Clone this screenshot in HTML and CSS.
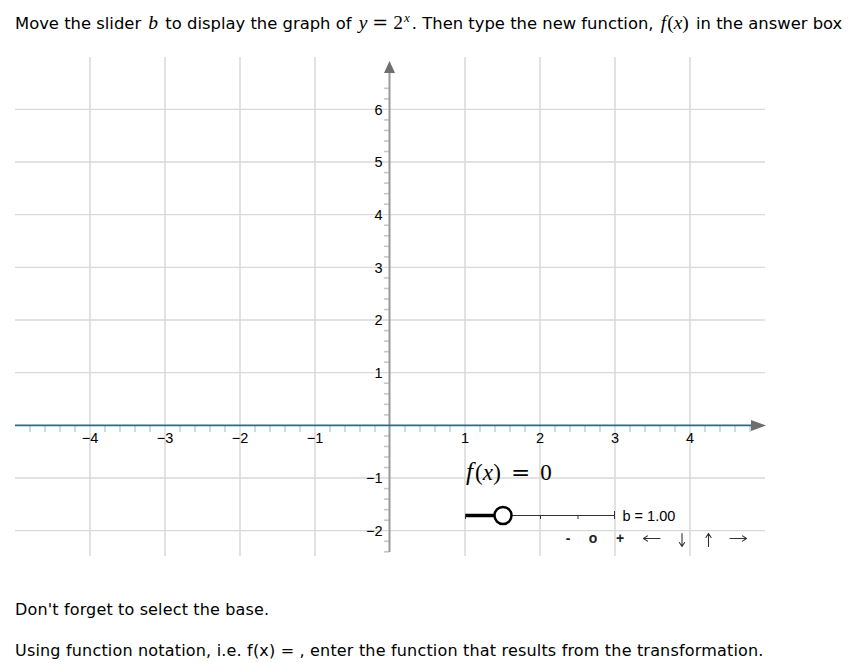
FILE: index.html
```html
<!DOCTYPE html>
<html>
<head>
<meta charset="utf-8">
<link rel="stylesheet" href="styles.css">
</head>
<body>
<p class="title">Move the slider <span class="math"><i>b</i></span> to display the graph of <span class="math"><i>y</i><span class="op">=</span>2<sup><i>x</i></sup></span>. Then type the new function, <span class="math"><i class="f">f</i>(<i>x</i>)</span> in the answer box</p>
<div class="graph">
<svg width="848" height="510" viewBox="0 50 848 510" xmlns="http://www.w3.org/2000/svg">
  <g stroke="#e2e2e2" stroke-width="2">
    <line x1="90" y1="55" x2="90" y2="554"/>
    <line x1="165" y1="55" x2="165" y2="554"/>
    <line x1="240" y1="55" x2="240" y2="554"/>
    <line x1="315" y1="55" x2="315" y2="554"/>
    <line x1="465" y1="55" x2="465" y2="554"/>
    <line x1="540" y1="55" x2="540" y2="554"/>
    <line x1="615" y1="55" x2="615" y2="554"/>
    <line x1="690" y1="55" x2="690" y2="554"/>
  </g>
  <g stroke="#d9d9d9" stroke-width="1.3">
    <line x1="15" y1="107.3" x2="765" y2="107.3"/>
    <line x1="15" y1="160" x2="765" y2="160"/>
    <line x1="15" y1="212.7" x2="765" y2="212.7"/>
    <line x1="15" y1="265.3" x2="765" y2="265.3"/>
    <line x1="15" y1="318" x2="765" y2="318"/>
    <line x1="15" y1="370.7" x2="765" y2="370.7"/>
    <line x1="15" y1="476" x2="765" y2="476"/>
    <line x1="15" y1="528.7" x2="765" y2="528.7"/>
  </g>
  <g id="xticks" stroke="#d0d0d0" stroke-width="1.6"></g>
  <g id="yticks" stroke="#c8c8c8" stroke-width="1.6"></g>
  <line x1="389.5" y1="66" x2="389.5" y2="550" stroke="#9a9a9a" stroke-width="2"/>
  <polygon points="389.5,59 384,71 395,71" fill="#6e6e6e"/>
  <line x1="15" y1="423.4" x2="762" y2="423.4" stroke="#1f6e9e" stroke-width="1.6"/>
  <polygon points="766,423.4 751,418 751,429" fill="#6e6e6e"/>
  <g class="lbl" text-anchor="middle">
    <text x="90" y="441">−4</text>
    <text x="165" y="441">−3</text>
    <text x="240" y="441">−2</text>
    <text x="315" y="441">−1</text>
    <text x="465" y="441">1</text>
    <text x="540" y="441">2</text>
    <text x="615" y="441">3</text>
    <text x="690" y="441">4</text>
  </g>
  <g class="lbl" text-anchor="end">
    <text x="382.5" y="112.5">6</text>
    <text x="382.5" y="165.2">5</text>
    <text x="382.5" y="218">4</text>
    <text x="382.5" y="270.5">3</text>
    <text x="382.5" y="323.2">2</text>
    <text x="382.5" y="376">1</text>
    <text x="382.5" y="481.3">−1</text>
    <text x="382.5" y="534">−2</text>
  </g>
  <text class="fx" x="466" y="478"><tspan class="it fb">f</tspan><tspan dx="2">(</tspan><tspan class="it">x</tspan><tspan dx="0.5">)</tspan><tspan class="eq" dx="10">=</tspan><tspan dx="10">0</tspan></text>
  <line x1="495" y1="513.5" x2="615" y2="513.5" stroke="#333" stroke-width="1"/>
  <line x1="465" y1="513.5" x2="496" y2="513.5" stroke="#000" stroke-width="3.5"/>
  <g stroke="#333" stroke-width="1">
    <line x1="465.5" y1="512" x2="465.5" y2="517"/>
    <line x1="540.5" y1="513" x2="540.5" y2="517"/>
    <line x1="578" y1="513" x2="578" y2="517"/>
    <line x1="614.5" y1="509" x2="614.5" y2="517"/>
  </g>
  <circle cx="503" cy="513.5" r="8.5" fill="#fff" stroke="#000" stroke-width="2.5"/>
  <text class="lbl" x="622.5" y="518.5">b = 1.00</text>
  <g class="btn" text-anchor="middle">
    <text x="568" y="541">-</text>
    <text x="593" y="541">o</text>
    <text x="620" y="541">+</text>
  </g>
  <g class="arr" fill="none" stroke="#333" stroke-width="1.1" stroke-linecap="round" stroke-linejoin="round">
    <path d="M643.5 536.5 H660 M643.5 536.5 l4 -2.6 M643.5 536.5 l4 2.6"/>
    <path d="M682 531.5 V544.5 M682 544.5 l-2.6 -4 M682 544.5 l2.6 -4"/>
    <path d="M708.5 531.5 V544.5 M708.5 531.5 l-2.6 4 M708.5 531.5 l2.6 4"/>
    <path d="M730 536.5 H746.5 M746.5 536.5 l-4 -2.6 M746.5 536.5 l-4 2.6"/>
  </g>
</svg>
</div>
<p class="note">Don't forget to select the base.</p>
<p class="note2">Using function notation, i.e. f(x) = , enter the function that results from the transformation.</p>
<script>
(function(){
  var ns="http://www.w3.org/2000/svg";
  var gx=document.getElementById("xticks");
  for(var x=30;x<=750;x+=15){
    if((x-15)%75===0) continue;
    var l=document.createElementNS(ns,"line");
    l.setAttribute("x1",x);l.setAttribute("x2",x);
    l.setAttribute("y1",424);l.setAttribute("y2",430);
    gx.appendChild(l);
  }
  var gy=document.getElementById("yticks");
  for(var i=-12;i<=32;i++){
    var y=423.4-i*52.67/5;
    if(i%5===0) continue;
    var l2=document.createElementNS(ns,"line");
    l2.setAttribute("x1",384);l2.setAttribute("x2",389);
    l2.setAttribute("y1",y);l2.setAttribute("y2",y);
    gy.appendChild(l2);
  }
})();
</script>
</body>
</html>
```

FILE: styles.css
```css
body {
  margin: 0;
  background: #fff;
  color: #000;
  font-family: "DejaVu Sans", sans-serif;
}
.title {
  margin: 0;
  padding: 12px 0 0 15px;
  font-size: 16.4px;
  line-height: 20px;
  white-space: nowrap;
}
.math {
  font-family: "Liberation Serif", serif;
  font-size: 19.5px;
  margin: 0 2px;
}
.math i {
  font-style: italic;
}
.math .f {
  padding-right: 1px;
}
.math .op {
  font-family: "DejaVu Serif", serif;
  margin: 0 5px;
  font-size: 19px;
}
.math sup {
  font-size: 13px;
  vertical-align: 7px;
  line-height: 0;
  margin-left: 1px;
}
.graph {
  margin-top: 18px;
  height: 510px;
}
.graph svg {
  display: block;
}
.lbl {
  font-family: "Liberation Sans", sans-serif;
  font-size: 14.5px;
  fill: #000;
}
.btn {
  font-family: "Liberation Sans", sans-serif;
  font-size: 14px;
  font-weight: bold;
  fill: #222;
}
.fx {
  font-family: "Liberation Serif", serif;
  font-size: 23px;
  fill: #000;
}
.fx .it {
  font-style: italic;
}
.fx .fb {
  font-size: 25px;
}
.fx .eq {
  font-family: "DejaVu Serif", serif;
  font-size: 23px;
}
.note {
  margin: 38px 0 0 15px;
  font-size: 16px;
  letter-spacing: 0.15px;
}
.note2 {
  margin: 22px 0 0 15px;
  font-size: 16px;
  letter-spacing: 0.18px;
}
```
